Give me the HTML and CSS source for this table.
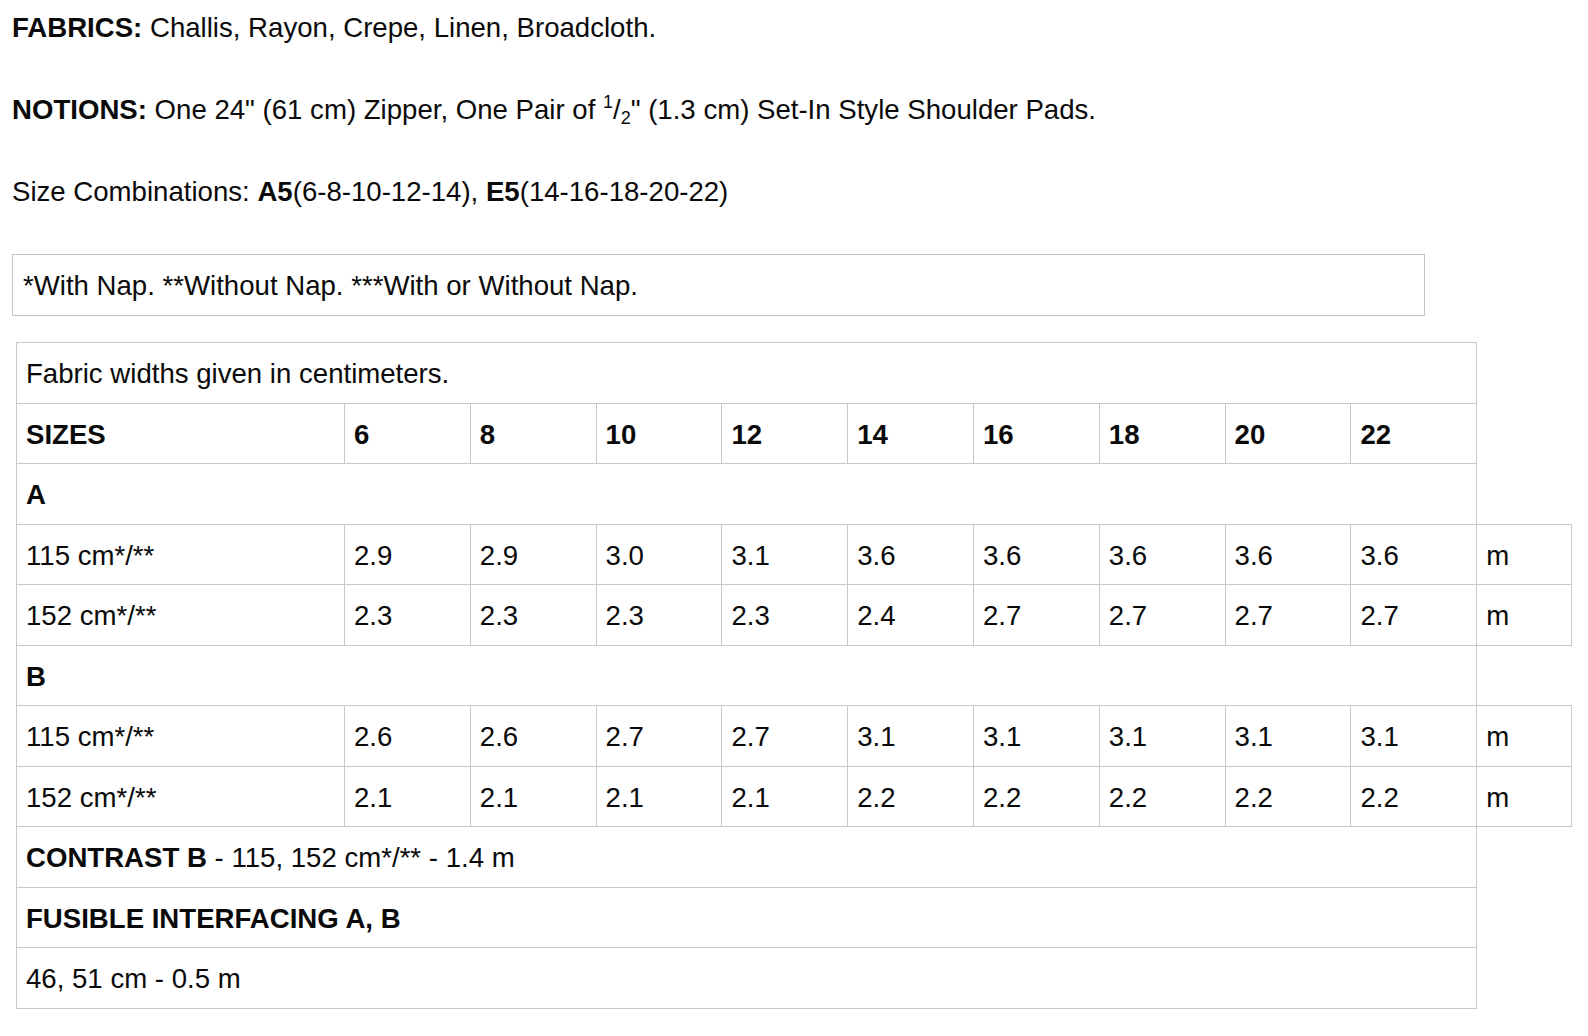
FILE: index.html
```html
<!DOCTYPE html>
<html>
<head>
<meta charset="utf-8">
<link rel="stylesheet" href="styles.css">
</head>
<body>
<div class="page">
  <p class="line"><b>FABRICS:</b> Challis, Rayon, Crepe, Linen, Broadcloth.</p>
  <p class="line"><b>NOTIONS:</b> One 24" (61 cm) Zipper, One Pair of <sup class="num">1</sup>/<sub class="den">2</sub>" (1.3 cm) Set-In Style Shoulder Pads.</p>
  <p class="line">Size Combinations: <b>A5</b>(6-8-10-12-14), <b>E5</b>(14-16-18-20-22)</p>
  <div class="note">*With Nap. **Without Nap. ***With or Without Nap.</div>
  <table class="yardage">
    <colgroup>
      <col class="c-first">
      <col class="c-size"><col class="c-size"><col class="c-size"><col class="c-size"><col class="c-size"><col class="c-size"><col class="c-size"><col class="c-size"><col class="c-size">
      <col class="c-unit">
    </colgroup>
    <tr><td colspan="10">Fabric widths given in centimeters.</td></tr>
    <tr class="bold"><td>SIZES</td><td>6</td><td>8</td><td>10</td><td>12</td><td>14</td><td>16</td><td>18</td><td>20</td><td>22</td></tr>
    <tr class="bold"><td colspan="10">A</td></tr>
    <tr><td>115 cm*/**</td><td>2.9</td><td>2.9</td><td>3.0</td><td>3.1</td><td>3.6</td><td>3.6</td><td>3.6</td><td>3.6</td><td>3.6</td><td>m</td></tr>
    <tr><td>152 cm*/**</td><td>2.3</td><td>2.3</td><td>2.3</td><td>2.3</td><td>2.4</td><td>2.7</td><td>2.7</td><td>2.7</td><td>2.7</td><td>m</td></tr>
    <tr class="bold"><td colspan="10">B</td></tr>
    <tr><td>115 cm*/**</td><td>2.6</td><td>2.6</td><td>2.7</td><td>2.7</td><td>3.1</td><td>3.1</td><td>3.1</td><td>3.1</td><td>3.1</td><td>m</td></tr>
    <tr><td>152 cm*/**</td><td>2.1</td><td>2.1</td><td>2.1</td><td>2.1</td><td>2.2</td><td>2.2</td><td>2.2</td><td>2.2</td><td>2.2</td><td>m</td></tr>
    <tr><td colspan="10"><b>CONTRAST B</b> - 115, 152 cm*/** - 1.4 m</td></tr>
    <tr class="bold"><td colspan="10">FUSIBLE INTERFACING A, B</td></tr>
    <tr><td colspan="10">46, 51 cm - 0.5 m</td></tr>
  </table>
</div>
</body>
</html>
```
FILE: styles.css
```css
html, body {
  margin: 0;
  padding: 0;
  background: #ffffff;
}
.page {
  padding: 12px 0 0 12px;
  font-family: "Liberation Sans", Arial, Helvetica, sans-serif;
  font-size: 27.6px;
  color: #0a0a0a;
}
.line {
  margin: 0 0 50px 0;
  height: 32px;
  line-height: 32px;
  white-space: nowrap;
}
.line b {
  font-weight: bold;
}
.num, .den {
  font-size: 18px;
  line-height: 0;
}
.num {
  vertical-align: 11px;
}
.den {
  vertical-align: -5px;
}
.note {
  margin-top: -4px;
  box-sizing: border-box;
  width: 1413px;
  height: 62px;
  border: 1px solid #c4c4c4;
  padding: 2px 10px 0 10px;
  display: flex;
  align-items: center;
}
.yardage {
  margin: 26px 0 0 4px;
  border-collapse: collapse;
  table-layout: fixed;
  width: 1555px;
}
.c-first { width: 328px; }
.c-size { width: 125.8px; }
.c-unit { width: 95px; }
.yardage td {
  border: 1px solid #c8c8c8;
  height: 56.5px;
  padding: 3px 9px 0 9px;
  vertical-align: middle;
  white-space: nowrap;
  line-height: 32px;
}
.yardage tr.bold td {
  font-weight: bold;
}
```
